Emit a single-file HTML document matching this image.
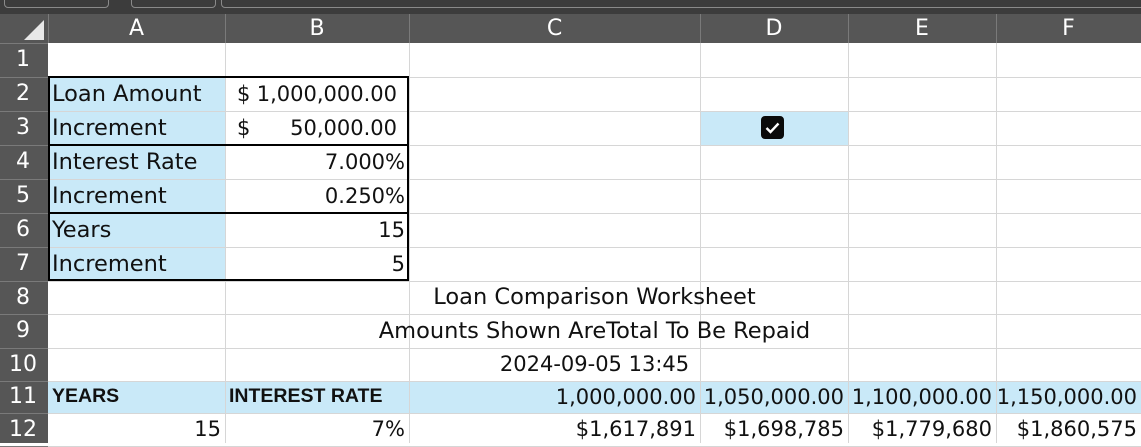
<!DOCTYPE html><html><head><style>
body{margin:0;width:1141px;height:442px;overflow:hidden;background:#fff;font-family:"DejaVu Sans","Liberation Sans",sans-serif;}
.top{position:absolute;left:0;top:0;width:1141px;height:14px;background:#3c3c3c;}
.tb{position:absolute;top:-6px;height:12px;border:1px solid #8a8a8a;border-radius:4px;}
.hdr{position:absolute;top:14px;left:0;width:1141px;height:29px;background:#565656;}
.c{position:absolute;box-sizing:border-box;font-size:21px;line-height:1;display:flex;align-items:center;white-space:nowrap;color:#111;}
.t{font-size:22.5px;}
.h{color:#fff;justify-content:center;font-size:22px;}
.g{position:absolute;background:#d6d6d6;}
</style></head><body>
<div class="top"><div class="tb" style="left:4px;width:103px"></div><div class="tb" style="left:131px;width:83px"></div><div class="tb" style="left:221px;width:930px"></div></div>
<div class="hdr"></div>
<div id="w"></div>
<script>
const cols=[0,48,225,409,700,848,996,1141];
const rows=[43,77,111,145,179,213,247,281,314,348,381,413,446];
let h='';
"ABCDEF".split('').forEach((L,i)=>{h+=`<div class="c h" style="left:${cols[i+1]}px;top:14px;width:${cols[i+2]-cols[i+1]}px;height:29px;">${L}</div>`;
 h+=`<div class="g" style="left:${cols[i+1]}px;top:14px;width:1px;height:29px;background:#7a7a7a"></div>`;});
h+=`<svg style="position:absolute;left:22px;top:20px" width="22" height="20"><polygon points="22,0 22,20 2,20" fill="#e8e8e8"/></svg>`;
h+=`<div style="position:absolute;left:0;top:43px;width:48px;height:400px;background:#565656"></div>`;
for(let r=1;r<=6;r++)h+=`<div style="position:absolute;left:48px;top:${rows[r]}px;width:177px;height:${rows[r+1]-rows[r]}px;background:#c9e9f8"></div>`;
h+=`<div style="position:absolute;left:700px;top:111px;width:148px;height:34px;background:#c9e9f8"></div>`;
h+=`<div style="position:absolute;left:48px;top:381px;width:1093px;height:32px;background:#c9e9f8"></div>`;
for(let i=1;i<cols.length-1;i++){let c=cols[i+1];h+=`<div class="g" style="left:${c}px;top:43px;width:1px;height:400px"></div>`;}
rows.forEach((y,i)=>{if(i>0)h+=`<div class="g" style="left:48px;top:${y}px;width:1093px;height:1px"></div>`;h+=`<div class="g" style="left:0;top:${y}px;width:48px;height:1px;background:#7a7a7a"></div>`;});
for(let r=0;r<12;r++)h+=`<div class="c h" style="left:0;top:${rows[r]}px;width:46px;height:${rows[r+1]-rows[r]}px">${r+1}</div>`;
h+=`<div style="position:absolute;left:48px;top:76px;width:361px;height:205px;box-sizing:border-box;border:2px solid #000"></div>`;
h+=`<div style="position:absolute;left:48px;top:144px;width:361px;height:2px;background:#000"></div>`;
h+=`<div style="position:absolute;left:48px;top:212px;width:361px;height:2px;background:#000"></div>`;
function cell(c1,c2,r,txt,al,extra='',cls=''){h+=`<div class="c ${cls}" style="left:${cols[c1]+4}px;top:${rows[r]}px;width:${cols[c2]-cols[c1]-8}px;height:${rows[r+1]-rows[r]}px;justify-content:${al};${extra}">${txt}</div>`;}
const A=["Loan Amount","Increment","Interest Rate","Increment","Years","Increment"];
A.forEach((t,i)=>cell(1,2,i+1,t,'flex-start','','t'));
cell(2,3,1,'<span style="margin-left:8px">$</span><span style="margin-left:auto;margin-right:8px">1,000,000.00</span>','flex-start');
cell(2,3,2,'<span style="margin-left:8px">$</span><span style="margin-left:auto;margin-right:8px">50,000.00</span>','flex-start');
["7.000%","0.250%","15","5"].forEach((t,i)=>cell(2,3,i+3,t,'flex-end'));
cell(1,7,7,'Loan Comparison Worksheet','center','','t');
cell(1,7,8,'Amounts Shown AreTotal To Be Repaid','center','','t');
cell(1,7,9,'2024-09-05 13:45','center');
cell(1,2,10,'YEARS','flex-start','font-weight:bold;font-family:Liberation Sans,sans-serif;font-size:19.5px');
cell(2,3,10,'INTEREST RATE','flex-start','font-weight:bold;font-family:Liberation Sans,sans-serif;font-size:19.5px');
["1,000,000.00","1,050,000.00","1,100,000.00","1,150,000.00"].forEach((t,i)=>cell(3+i,4+i,10,t,'flex-end','overflow:visible'));
cell(1,2,11,'15','flex-end');cell(2,3,11,'7%','flex-end');
["$1,617,891","$1,698,785","$1,779,680","$1,860,575"].forEach((t,i)=>cell(3+i,4+i,11,t,'flex-end'));
h+=`<svg style="position:absolute;left:761px;top:116px" width="23" height="23"><rect x="0" y="0" width="23" height="23" rx="4" fill="#0a0a0a"/><path d="M5.5 12 L9.5 16 L17.5 7.5" stroke="#fff" stroke-width="2.4" fill="none"/></svg>`;
document.getElementById('w').innerHTML=h;
</script>
</body></html>
